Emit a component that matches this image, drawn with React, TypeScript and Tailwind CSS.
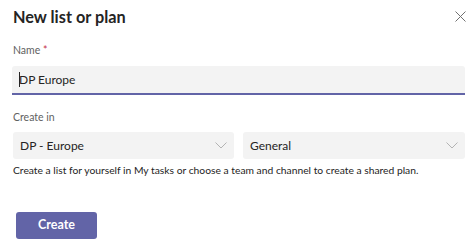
import React from "react";

function Chevron() {
  return (
    <svg width="12" height="7" viewBox="0 0 12 7" fill="none">
      <path d="M0.5 0.5 L6 6 L11.5 0.5" stroke="#b3b3b3" strokeWidth="1" />
    </svg>
  );
}

export default function App() {
  return (
    <div
      className="w-[474px] h-[246px] bg-white relative text-[#252424]"
      style={{ fontFamily: 'Lato, "Open Sans", sans-serif' }}
    >
      <button className="absolute left-[454px] top-[10px] w-[13px] h-[13px] flex items-center justify-center">
        <svg width="11" height="11" viewBox="0 0 11 11">
          <path d="M0.5 0.5 L10.5 10.5 M10.5 0.5 L0.5 10.5" stroke="#707070" strokeWidth="1" />
        </svg>
      </button>
      <div className="pl-[12px] pr-[9px] pt-[5px] flex flex-col">
        <div className="h-[24px] text-[16.3px] leading-[24px] font-bold pl-[1px]">New list or plan</div>
        <div className="mt-[13px] h-[16px] text-[10.5px] leading-[16px] text-[#616161] pl-[1px]">
          Name <span className="text-[#c4314b]">*</span>
        </div>
        <div className="mt-[8px] h-[29px] bg-[#f3f3f3] border-b-2 border-[#6264a7] rounded-t-[3px] flex items-center pl-[7px] text-[12px]">
          <span className="w-px h-[15px] bg-[#252424] -mr-px" />
          DP Europe
        </div>
        <div className="mt-[14px] h-[16px] text-[10.5px] leading-[16px] text-[#616161] pl-[1px]">Create in</div>
        <div className="mt-[7px] flex gap-[9px] pl-[1px]">
          <div className="w-[221px] h-[27px] bg-[#f3f3f3] rounded-[3px] flex items-center justify-between pl-[7px] pr-[7px] text-[12px]">
            <span>DP - Europe</span>
            <Chevron />
          </div>
          <div className="flex-1 h-[27px] bg-[#f3f3f3] rounded-[3px] flex items-center justify-between pl-[7px] pr-[7px] text-[12px]">
            <span>General</span>
            <Chevron />
          </div>
        </div>
        <div className="mt-[3px] h-[16px] text-[10.3px] leading-[16px] text-[#252424] pl-[1px]">
          Create a list for yourself in My tasks or choose a team and channel to create a shared plan.
        </div>
        <div className="mt-[33px] pl-[4px]">
          <button className="w-[81px] h-[27px] bg-[#6264a7] rounded-[3px] text-white font-bold text-[12.5px]">
            Create
          </button>
        </div>
      </div>
    </div>
  );
}
